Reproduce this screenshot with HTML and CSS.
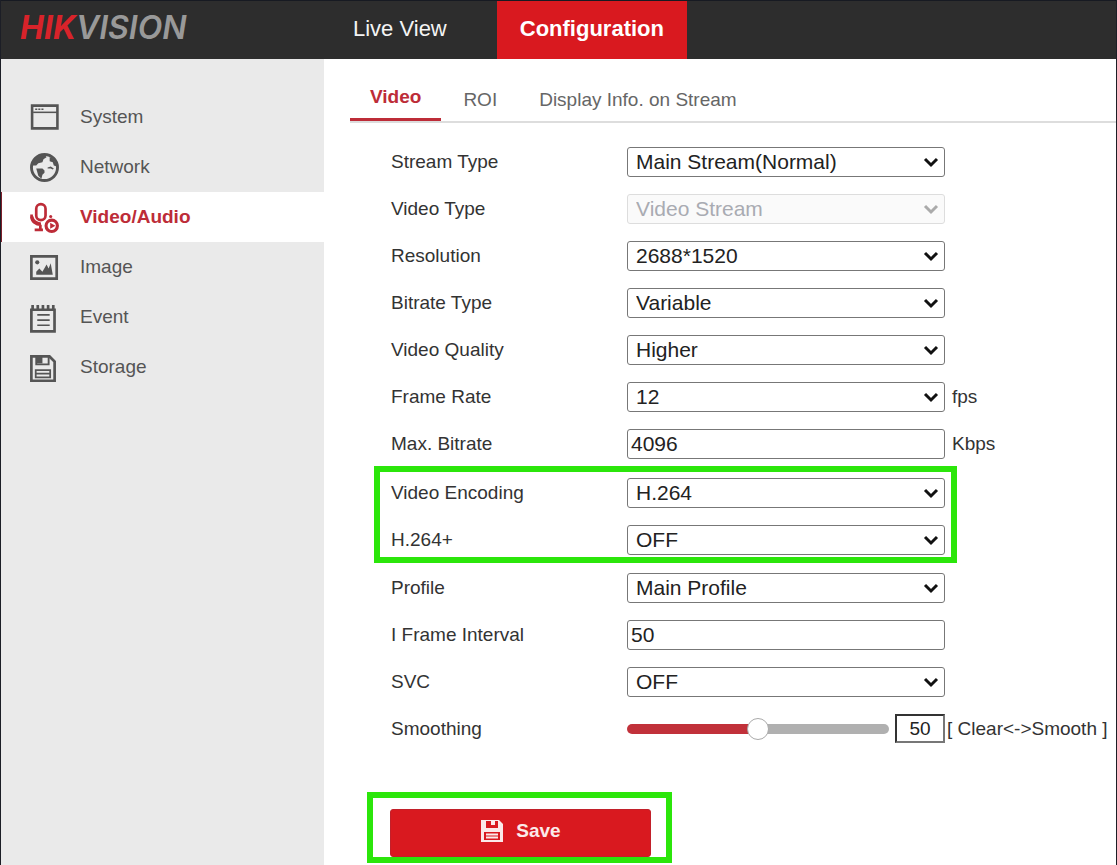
FILE: index.html
```html
<!DOCTYPE html>
<html lang="en">
<head>
  <meta charset="UTF-8">
  <meta name="viewport" content="width=device-width, initial-scale=1.0">
  <title>Configuration - Video/Audio</title>
  <link rel="stylesheet" href="styles.css">
</head>
<body>

  <header class="header">
    <a class="logo" href="#"><span>HIK</span>VISION</a>
    <nav class="main-nav">
      <a href="#">Live View</a>
      <a href="#" class="active">Configuration</a>
    </nav>
  </header>

  <div class="page">
    <nav class="sidebar">
      <a href="#">
        <svg viewBox="0 0 30 30" fill="none" stroke="currentColor"><path d="M3 3.500h24.500v22H3z" stroke-width="2.500"/><path d="M4 10h23" stroke-width="1.500"/><path d="M6 7h9" stroke-width="1.500" stroke-dasharray="2 1"/></svg>
        System
      </a>
      <a href="#">
        <svg viewBox="0 0 30 30"><circle cx="15" cy="15" r="12.600" fill="none" stroke="currentColor" stroke-width="2.800"/><path fill="currentColor" d="M3 13 4 8l5-5 6-1 2 3-3 2-1 3-4 1-2 2zM7 16h6l2 2 0 2-2 2-1 4-3-3zM20 5l3 1 4 6 0 2-3-1-1-3-3-1zM18 15l3-1 3 2-1 1-2-1-3 0z"/></svg>
        Network
      </a>
      <a href="#" class="active">
        <svg viewBox="0 0 30 30" fill="none" stroke="currentColor"><rect x="7" y="2" width="9" height="15.500" rx="4.500" stroke-width="2.600"/><path d="M2.500 12v2c0 5 4 8 9 8M11 22v5M5.500 27h8" stroke-width="2.600"/><path d="M2.500 14c1 4 4 7 9 7.500" stroke-width="3.200"/><circle cx="21" cy="14" r="1.500" fill="currentColor" stroke="none"/><circle cx="22" cy="23" r="5.500" stroke-width="3"/><path d="M20.500 20l5 3-5 3z" fill="currentColor" stroke="none"/></svg>
        Video/Audio
      </a>
      <a href="#">
        <svg viewBox="0 0 30 30"><path d="M2.300 4.300h24.500v21.500H2.300z" fill="none" stroke="currentColor" stroke-width="2.600"/><circle cx="8" cy="10" r="2" fill="currentColor"/><path d="M7 22v-3l3-3 3 3 4-7 2 4 2-5 2 11z" fill="currentColor"/></svg>
        Image
      </a>
      <a href="#">
        <svg viewBox="0 0 30 30" fill="none" stroke="currentColor"><path d="M2.300 7.500h22.400v21H2.300z" stroke-width="2.600"/><path d="M3.500 3v4M8.500 3v4M13.500 3v4M18.500 3v4M23.500 3v4" stroke-width="2.600"/><path d="M8 12.500h12M8 17.500h12M8 22.500h12" stroke-width="1.600"/></svg>
        Event
      </a>
      <a href="#">
        <svg viewBox="0 0 30 30" fill="none" stroke="currentColor"><path d="M2.300 4.300h17.500l5 5v18.500H2.300z" stroke-width="2.600"/><path d="M7 4v8h12V4" stroke-width="1.800"/><path d="M7 4h6v7H7z" fill="currentColor" stroke="none"/><path d="M6.500 17.500h14v7h-14zM7 21h13" stroke-width="1.700"/></svg>
        Storage
      </a>
    </nav>

    <main class="content">
      <nav class="tabs">
        <a href="#" class="active">Video</a>
        <a href="#">ROI</a>
        <a href="#">Display Info. on Stream</a>
      </nav>

      <form class="settings">
        <div class="group">
          <div class="row">
            <label for="stream-type">Stream Type</label>
            <select id="stream-type"><option>Main Stream(Normal)</option></select>
          </div>
          <div class="row">
            <label for="video-type">Video Type</label>
            <select id="video-type" disabled><option>Video Stream</option></select>
          </div>
          <div class="row">
            <label for="resolution">Resolution</label>
            <select id="resolution"><option>2688*1520</option></select>
          </div>
          <div class="row">
            <label for="bitrate-type">Bitrate Type</label>
            <select id="bitrate-type"><option>Variable</option></select>
          </div>
          <div class="row">
            <label for="video-quality">Video Quality</label>
            <select id="video-quality"><option>Higher</option></select>
          </div>
          <div class="row">
            <label for="frame-rate">Frame Rate</label>
            <select id="frame-rate"><option>12</option></select>
            <span class="unit">fps</span>
          </div>
          <div class="row">
            <label for="max-bitrate">Max. Bitrate</label>
            <input type="text" id="max-bitrate" value="4096">
            <span class="unit">Kbps</span>
          </div>
        </div>

        <div class="group marked">
          <div class="row">
            <label for="video-encoding">Video Encoding</label>
            <select id="video-encoding"><option>H.264</option></select>
          </div>
          <div class="row">
            <label for="h264-plus">H.264+</label>
            <select id="h264-plus"><option>OFF</option></select>
          </div>
        </div>

        <div class="group">
          <div class="row">
            <label for="profile">Profile</label>
            <select id="profile"><option>Main Profile</option></select>
          </div>
          <div class="row">
            <label for="i-frame">I Frame Interval</label>
            <input type="text" id="i-frame" value="50">
          </div>
          <div class="row">
            <label for="svc">SVC</label>
            <select id="svc"><option>OFF</option></select>
          </div>
          <div class="row">
            <label for="smoothing">Smoothing</label>
            <div class="slider">
              <input type="range" id="smoothing" min="0" max="100" value="50">
              <input type="text" class="slider-value" aria-label="Smoothing value" value="50">
            </div>
            <span class="hint">[ Clear&lt;-&gt;Smooth ]</span>
          </div>
        </div>

        <div class="save-box">
          <button type="button" class="btn">
            <svg viewBox="0 0 24 24"><path fill="currentColor" fill-rule="evenodd" d="M1 1h18l4 4v18H1zM6 2v7h12V2h-3v4h-4V2zM4 13v8h16v-8z"/><path d="M6 15.500h12M6 18.500h12" stroke="currentColor" stroke-width="1.800"/></svg>
            Save
          </button>
        </div>
      </form>
    </main>
  </div>

</body>
</html>
```

FILE: styles.css
```css
* {
  box-sizing: border-box;
}

body {
  margin: 0;
  min-height: 100vh;
  display: flex;
  flex-direction: column;
  font-family: "Liberation Sans", Arial, sans-serif;
  font-size: 19px;
  color: #333;
  background: #fff;
  border-left: 1px solid #1c1e26;
  border-right: 1px solid #1c1e26;
}

a {
  color: inherit;
  text-decoration: none;
}

/* top bar */
.header {
  display: flex;
  height: 59px;
  background: #2d2d2d;
  border-top: 1px solid #171a22;
}

.logo {
  width: 324px;
  padding-left: 19px;
  font-family: Inter, "Liberation Sans", sans-serif;
  font-size: 32px;
  line-height: 54px;
  font-weight: 600;
  font-style: italic;
  color: #999;
}

.logo span {
  color: #d8232a;
  font-weight: bold;
}

.main-nav {
  display: flex;
  gap: 22px;
  font-size: 22px;
  line-height: 56px;
  color: #f4f4f4;
}

.main-nav a {
  padding: 0 28px;
}

.main-nav .active {
  padding: 0 23px;
  background: #d9191f;
  color: #fff;
  font-weight: bold;
}

.page {
  flex: 1;
  display: flex;
}

/* left menu */
.sidebar {
  flex: 0 0 323px;
  padding-top: 33px;
  background: #eaeaea;
  color: #555;
}

.sidebar a {
  display: flex;
  align-items: center;
  gap: 20px;
  height: 50px;
  padding-left: 27px;
  border-left: 1px solid transparent;
}

.sidebar svg {
  width: 31px;
  height: 31px;
}

.sidebar .active {
  background: #fff;
  border-left-color: #7c1f2b;
  color: #bd2c38;
  font-weight: bold;
}

.content {
  flex: 1;
  min-width: 0;
}

.tabs {
  display: flex;
  gap: 2px;
  height: 64px;
  margin-left: 26px;
  border-bottom: 2px solid #ddd;
  line-height: 22px;
  color: #666;
}

.tabs a {
  padding: 30px 20px 0;
}

.tabs .active {
  padding-top: 27px;
  border-bottom: 3px solid #bd2c38;
  color: #bd2c38;
  font-weight: bold;
}

/* form */
.settings {
  padding: 15px 0 0 67px;
}

.row {
  display: flex;
  align-items: center;
  height: 47px;
}

.row label {
  flex: 0 0 236px;
}

.row select,
.row > input {
  flex: 0 1 318px;
  min-width: 0;
  height: 30px;
  padding: 0 3px;
  border: 1px solid #777;
  border-radius: 3px;
  background: #fff;
  color: #222;
  font-family: inherit;
  font-size: 21px;
}

.row select {
  appearance: none;
  padding: 0 30px 0 8px;
  background: #fff url("data:image/svg+xml,%3Csvg xmlns='http://www.w3.org/2000/svg' width='16' height='12' fill='none' stroke='%23111' stroke-width='3'%3E%3Cpath d='M2 3l6 6 6-6'/%3E%3C/svg%3E") no-repeat right 5px center;
}

.row select:disabled {
  opacity: 1;
  border-color: #ddd;
  background-color: #fafafa;
  background-image: url("data:image/svg+xml,%3Csvg xmlns='http://www.w3.org/2000/svg' width='16' height='12' fill='none' stroke='%23aaa' stroke-width='3'%3E%3Cpath d='M2 3l6 6 6-6'/%3E%3C/svg%3E");
  color: #a9abb2;
}

.unit {
  margin-left: 7px;
}

.hint {
  margin-left: 2px;
  white-space: nowrap;
}

/* green frame drawn over the rows */
.marked {
  position: relative;
  width: 583px;
  max-width: 100%;
  margin: 2px 0 1px;
}

.marked::after {
  content: "";
  position: absolute;
  top: -3px;
  right: 17px;
  bottom: 0;
  left: -17px;
  border: 6px solid #2be60a;
  pointer-events: none;
}

.slider {
  flex: 0 1 318px;
  display: flex;
  align-items: center;
  gap: 6px;
  min-width: 0;
}

.slider input[type="range"] {
  flex: 1;
  min-width: 0;
  height: 10px;
  margin: 0;
  appearance: none;
  border-radius: 5px;
  background: linear-gradient(to right, #c1313a 50%, #b0b0b0 50%);
}

.slider input[type="range"]::-webkit-slider-thumb {
  appearance: none;
  width: 22px;
  height: 22px;
  border: 1px solid #aaa;
  border-radius: 50%;
  background: #fff;
}

.slider-value {
  width: 50px;
  height: 29px;
  padding: 0;
  border: 2px solid;
  border-color: #333 #777 #777 #333;
  font-family: inherit;
  font-size: 19px;
  text-align: center;
  color: #222;
}

.save-box {
  width: 305px;
  max-width: 100%;
  margin: 40px 0 1px -24px;
  padding: 11px 15px 0 17px;
  border: 6px solid #2be60a;
}

.btn {
  display: flex;
  justify-content: center;
  align-items: center;
  gap: 12px;
  width: 100%;
  height: 48px;
  padding: 0 0 4px;
  border: 1px solid #c2202a;
  border-radius: 3px;
  background: #d9191f;
  color: #fbe9e9;
  font-family: inherit;
  font-size: 19px;
  font-weight: bold;
  cursor: pointer;
}

.btn svg {
  width: 24px;
  height: 24px;
}
```
